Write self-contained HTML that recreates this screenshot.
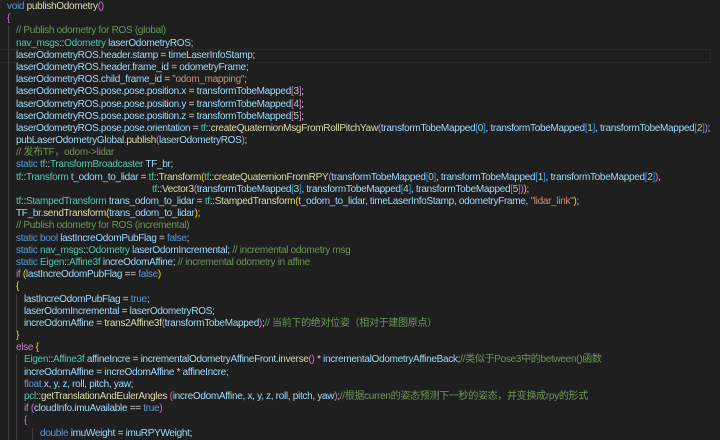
<!DOCTYPE html>
<html><head><meta charset="utf-8"><style>
body{margin:0;background:#1f1f1f;width:720px;height:429px;overflow:hidden}
.c{position:absolute;left:0;top:1px;font-family:"Liberation Sans","Noto Sans CJK SC",sans-serif;font-size:10px;letter-spacing:-0.3px;line-height:12.2px;color:#9cdcfe}
.l{height:12.2px;position:relative;white-space:pre}
.k{color:#569cd6}.t{color:#4ec9b0}.f{color:#dcdcaa}.m{color:#6a9955}.s{color:#ce9178}.p{color:#c586c0}.n{color:#b5cea8}
.y{color:#ffd700}.v{color:#da70d6}.b{color:#179fff}.w{color:#d4d4d4}
.g{position:absolute;top:0;width:1px;height:12.2px;background:#404040}
</style></head><body><div class="c"><div class="l" style="padding-left:7px"><span class="k">void</span> <span class="f">publishOdometry</span><span class="v">()</span></div><div class="l" style="padding-left:7px"><span class="v">{</span></div><div class="l" style="padding-left:16px"><i class="g" style="left:8px"></i><span class="m">// Publish odometry for ROS (global)</span></div><div class="l" style="padding-left:16px"><i class="g" style="left:8px"></i><span class="t">nav_msgs</span><span class="w">::</span><span class="t">Odometry</span> laserOdometryROS<span class="w">;</span></div><div class="l" style="padding-left:16px;outline:1px solid #2a2a2a"><i class="g" style="left:8px"></i>laserOdometryROS.header.stamp <span class="w">=</span> timeLaserInfoStamp<span class="w">;</span></div><div class="l" style="padding-left:16px"><i class="g" style="left:8px"></i>laserOdometryROS.header.frame_id <span class="w">=</span> odometryFrame<span class="w">;</span></div><div class="l" style="padding-left:16px"><i class="g" style="left:8px"></i>laserOdometryROS.child_frame_id <span class="w">=</span> <span class="s">"odom_mapping"</span><span class="w">;</span></div><div class="l" style="padding-left:16px"><i class="g" style="left:8px"></i>laserOdometryROS.pose.pose.position.x <span class="w">=</span> transformTobeMapped<span class="v">[</span><span class="n">3</span><span class="v">]</span><span class="w">;</span></div><div class="l" style="padding-left:16px"><i class="g" style="left:8px"></i>laserOdometryROS.pose.pose.position.y <span class="w">=</span> transformTobeMapped<span class="v">[</span><span class="n">4</span><span class="v">]</span><span class="w">;</span></div><div class="l" style="padding-left:16px"><i class="g" style="left:8px"></i>laserOdometryROS.pose.pose.position.z <span class="w">=</span> transformTobeMapped<span class="v">[</span><span class="n">5</span><span class="v">]</span><span class="w">;</span></div><div class="l" style="padding-left:16px"><i class="g" style="left:8px"></i>laserOdometryROS.pose.pose.orientation <span class="w">=</span> <span class="t">tf</span><span class="w">::</span><span class="f">createQuaternionMsgFromRollPitchYaw</span><span class="v">(</span>transformTobeMapped<span class="b">[</span><span class="n">0</span><span class="b">]</span>, transformTobeMapped<span class="b">[</span><span class="n">1</span><span class="b">]</span>, transformTobeMapped<span class="b">[</span><span class="n">2</span><span class="b">]</span><span class="v">)</span><span class="w">;</span></div><div class="l" style="padding-left:16px"><i class="g" style="left:8px"></i>pubLaserOdometryGlobal.<span class="f">publish</span><span class="v">(</span>laserOdometryROS<span class="v">)</span><span class="w">;</span></div><div class="l" style="padding-left:16px"><i class="g" style="left:8px"></i><span class="m">// 发布TF，odom-&gt;lidar</span></div><div class="l" style="padding-left:16px"><i class="g" style="left:8px"></i><span class="k">static</span> <span class="t">tf</span><span class="w">::</span><span class="t">TransformBroadcaster</span> TF_br<span class="w">;</span></div><div class="l" style="padding-left:16px"><i class="g" style="left:8px"></i><span class="t">tf</span><span class="w">::</span><span class="t">Transform</span> t_odom_to_lidar <span class="w">=</span> <span class="t">tf</span><span class="w">::</span><span class="f">Transform</span><span class="y">(</span><span class="t">tf</span><span class="w">::</span><span class="f">createQuaternionFromRPY</span><span class="v">(</span>transformTobeMapped<span class="b">[</span><span class="n">0</span><span class="b">]</span>, transformTobeMapped<span class="b">[</span><span class="n">1</span><span class="b">]</span>, transformTobeMapped<span class="b">[</span><span class="n">2</span><span class="b">]</span><span class="v">)</span>,</div><div class="l" style="padding-left:152px"><i class="g" style="left:8px"></i><span class="t">tf</span><span class="w">::</span><span class="f">Vector3</span><span class="v">(</span>transformTobeMapped<span class="b">[</span><span class="n">3</span><span class="b">]</span>, transformTobeMapped<span class="b">[</span><span class="n">4</span><span class="b">]</span>, transformTobeMapped<span class="b">[</span><span class="n">5</span><span class="b">]</span><span class="v">)</span><span class="y">)</span><span class="w">;</span></div><div class="l" style="padding-left:16px"><i class="g" style="left:8px"></i><span class="t">tf</span><span class="w">::</span><span class="t">StampedTransform</span> trans_odom_to_lidar <span class="w">=</span> <span class="t">tf</span><span class="w">::</span><span class="f">StampedTransform</span><span class="y">(</span>t_odom_to_lidar, timeLaserInfoStamp, odometryFrame, <span class="s">"lidar_link"</span><span class="y">)</span><span class="w">;</span></div><div class="l" style="padding-left:16px"><i class="g" style="left:8px"></i>TF_br.<span class="f">sendTransform</span><span class="y">(</span>trans_odom_to_lidar<span class="y">)</span><span class="w">;</span></div><div class="l" style="padding-left:16px"><i class="g" style="left:8px"></i><span class="m">// Publish odometry for ROS (incremental)</span></div><div class="l" style="padding-left:16px"><i class="g" style="left:8px"></i><span class="k">static</span> <span class="k">bool</span> lastIncreOdomPubFlag <span class="w">=</span> <span class="k">false</span><span class="w">;</span></div><div class="l" style="padding-left:16px"><i class="g" style="left:8px"></i><span class="k">static</span> <span class="t">nav_msgs</span><span class="w">::</span><span class="t">Odometry</span> laserOdomIncremental<span class="w">;</span> <span class="m">// incremental odometry msg</span></div><div class="l" style="padding-left:16px"><i class="g" style="left:8px"></i><span class="k">static</span> <span class="t">Eigen</span><span class="w">::</span><span class="t">Affine3f</span> increOdomAffine<span class="w">;</span> <span class="m">// incremental odometry in affine</span></div><div class="l" style="padding-left:16px"><i class="g" style="left:8px"></i><span class="p">if</span> <span class="y">(</span>lastIncreOdomPubFlag <span class="w">==</span> <span class="k">false</span><span class="y">)</span></div><div class="l" style="padding-left:16px"><i class="g" style="left:8px"></i><span class="y">{</span></div><div class="l" style="padding-left:24px"><i class="g" style="left:8px"></i><i class="g" style="left:16px"></i>lastIncreOdomPubFlag <span class="w">=</span> <span class="k">true</span><span class="w">;</span></div><div class="l" style="padding-left:24px"><i class="g" style="left:8px"></i><i class="g" style="left:16px"></i>laserOdomIncremental <span class="w">=</span> laserOdometryROS<span class="w">;</span></div><div class="l" style="padding-left:24px"><i class="g" style="left:8px"></i><i class="g" style="left:16px"></i>increOdomAffine <span class="w">=</span> <span class="f">trans2Affine3f</span><span class="v">(</span>transformTobeMapped<span class="v">)</span><span class="w">;</span><span class="m">// 当前下的绝对位姿（相对于建图原点）</span></div><div class="l" style="padding-left:16px"><i class="g" style="left:8px"></i><span class="y">}</span></div><div class="l" style="padding-left:16px"><i class="g" style="left:8px"></i><span class="p">else</span> <span class="y">{</span></div><div class="l" style="padding-left:24px"><i class="g" style="left:8px"></i><i class="g" style="left:16px"></i><span class="t">Eigen</span><span class="w">::</span><span class="t">Affine3f</span> affineIncre <span class="w">=</span> incrementalOdometryAffineFront.<span class="f">inverse</span><span class="v">()</span> <span class="w">*</span> incrementalOdometryAffineBack<span class="w">;</span><span class="m">//类似于Pose3中的between()函数</span></div><div class="l" style="padding-left:24px"><i class="g" style="left:8px"></i><i class="g" style="left:16px"></i>increOdomAffine <span class="w">=</span> increOdomAffine <span class="w">*</span> affineIncre<span class="w">;</span></div><div class="l" style="padding-left:24px"><i class="g" style="left:8px"></i><i class="g" style="left:16px"></i><span class="k">float</span> x, y, z, roll, pitch, yaw<span class="w">;</span></div><div class="l" style="padding-left:24px"><i class="g" style="left:8px"></i><i class="g" style="left:16px"></i><span class="t">pcl</span><span class="w">::</span><span class="f">getTranslationAndEulerAngles</span> <span class="v">(</span>increOdomAffine, x, y, z, roll, pitch, yaw<span class="v">)</span><span class="w">;</span><span class="m">//根据curren的姿态预测下一秒的姿态，并变换成rpy的形式</span></div><div class="l" style="padding-left:24px"><i class="g" style="left:8px"></i><i class="g" style="left:16px"></i><span class="p">if</span> <span class="v">(</span>cloudInfo.imuAvailable <span class="w">==</span> <span class="k">true</span><span class="v">)</span></div><div class="l" style="padding-left:24px"><i class="g" style="left:8px"></i><i class="g" style="left:16px"></i><span class="v">{</span></div><div class="l" style="padding-left:40px"><i class="g" style="left:8px"></i><i class="g" style="left:16px"></i><i class="g" style="left:32px"></i><span class="k">double</span> imuWeight <span class="w">=</span> imuRPYWeight<span class="w">;</span></div></div></body></html>
